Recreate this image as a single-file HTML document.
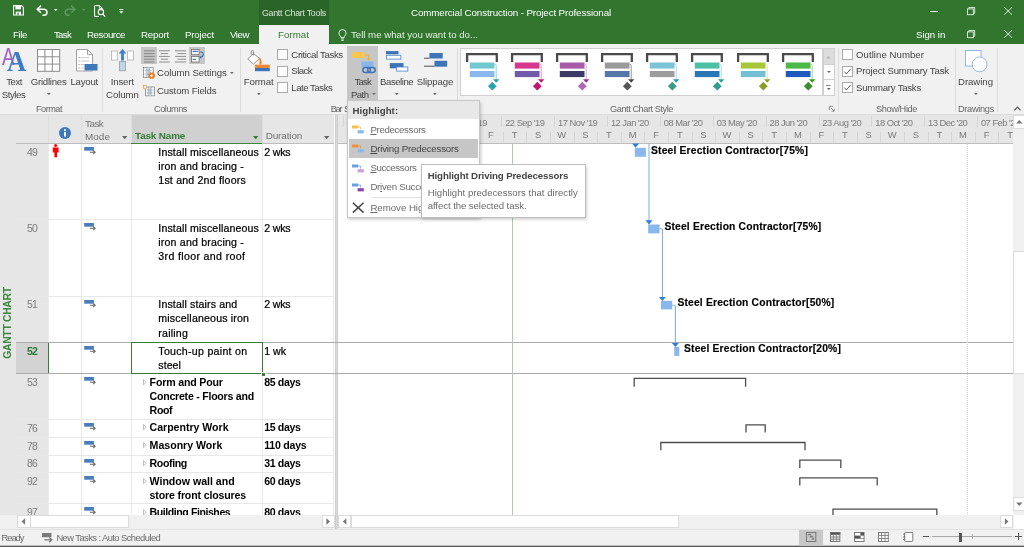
<!DOCTYPE html><html><head><meta charset="utf-8"><title>Commercial Construction - Project Professional</title><style>

html,body{margin:0;padding:0;}
body{width:1024px;height:547px;overflow:hidden;position:relative;background:#fff;font-family:"Liberation Sans",sans-serif;}
#root{position:absolute;left:0;top:0;width:1024px;height:547px;overflow:hidden;will-change:transform;}
.a{position:absolute;}
.t{position:absolute;white-space:nowrap;line-height:12px;font-family:"Liberation Sans",sans-serif;}
svg{position:absolute;overflow:visible;}
.cb{position:absolute;width:9px;height:9px;border:1px solid #ababab;background:#fff;}
.sep{position:absolute;width:1px;background:#dcdcdc;top:48px;height:64px;}

</style></head><body><div id="root">
<div class="a" style="left:0px;top:0px;width:1024px;height:44px;background:#31752f;"></div>
<div class="a" style="left:259px;top:0px;width:70px;height:25px;background:#2a6428;"></div>
<div class="a" style="left:259px;top:25px;width:70px;height:19px;background:#f1f1f1;"></div>
<span class="t" id="t0" style="left:262px;top:7px;font-size:8.8px;color:#d6e6d5;letter-spacing:-0.253px;">Gantt Chart Tools</span>
<span class="t" id="t1" style="left:411px;top:6.7px;font-size:9.8px;color:#fff;letter-spacing:-0.126px;">Commercial Construction - Project Professional</span>
<span class="t" id="t2" style="left:13px;top:29px;font-size:9.7px;color:#fff;letter-spacing:-0.406px;">File</span>
<span class="t" id="t3" style="left:54px;top:29px;font-size:9.7px;color:#fff;letter-spacing:-0.730px;">Task</span>
<span class="t" id="t4" style="left:87px;top:29px;font-size:9.7px;color:#fff;letter-spacing:-0.434px;">Resource</span>
<span class="t" id="t5" style="left:141px;top:29px;font-size:9.7px;color:#fff;letter-spacing:-0.180px;">Report</span>
<span class="t" id="t6" style="left:185px;top:29px;font-size:9.7px;color:#fff;letter-spacing:-0.165px;">Project</span>
<span class="t" id="t7" style="left:230px;top:29px;font-size:9.7px;color:#fff;letter-spacing:-0.457px;">View</span>
<span class="t" id="t8" style="left:278px;top:29px;font-size:9.7px;color:#357a33;letter-spacing:0.052px;">Format</span>
<span class="t" id="t9" style="left:351px;top:29px;font-size:9.7px;color:#e4efe3;letter-spacing:-0.021px;">Tell me what you want to do...</span>
<span class="t" id="t10" style="left:916.1px;top:28.8px;font-size:9.7px;color:#fff;letter-spacing:-0.075px;">Sign in</span>
<div class="a" style="left:0px;top:44px;width:1024px;height:71px;background:#f1f1f1;"></div>
<div class="a" style="left:0px;top:114px;width:1024px;height:1px;background:#dcdcdc;"></div>
<div class="sep" style="left:102px"></div>
<div class="sep" style="left:240px"></div>
<div class="sep" style="left:457px"></div>
<div class="sep" style="left:838px"></div>
<div class="sep" style="left:955px"></div>
<div class="sep" style="left:997px"></div>
<span class="t" id="t11" style="left:6.3px;top:75.7px;font-size:9.6px;color:#444;letter-spacing:-0.477px;">Text</span>
<span class="t" id="t12" style="left:1.8px;top:88.6px;font-size:9.6px;color:#444;letter-spacing:-0.440px;">Styles</span>
<span class="t" id="t13" style="left:30.7px;top:75.7px;font-size:9.6px;color:#444;letter-spacing:-0.229px;">Gridlines</span>
<span class="t" id="t14" style="left:70.5px;top:75.7px;font-size:9.6px;color:#444;letter-spacing:-0.219px;">Layout</span>
<span class="t" id="t15" style="left:110.8px;top:75.7px;font-size:9.6px;color:#444;letter-spacing:-0.167px;">Insert</span>
<span class="t" id="t16" style="left:106px;top:88.6px;font-size:9.6px;color:#444;letter-spacing:-0.027px;">Column</span>
<span class="t" id="t17" style="left:157px;top:67.3px;font-size:9.6px;color:#444;letter-spacing:-0.039px;">Column Settings</span>
<span class="t" id="t18" style="left:157px;top:85.2px;font-size:9.6px;color:#444;letter-spacing:-0.147px;">Custom Fields</span>
<span class="t" id="t19" style="left:243.8px;top:75.7px;font-size:9.6px;color:#444;letter-spacing:-0.115px;">Format</span>
<span class="t" id="t20" style="left:291.3px;top:48.7px;font-size:9.6px;color:#444;letter-spacing:-0.346px;">Critical Tasks</span>
<span class="t" id="t21" style="left:291.3px;top:65.2px;font-size:9.6px;color:#444;letter-spacing:-0.554px;">Slack</span>
<span class="t" id="t22" style="left:291.3px;top:82px;font-size:9.6px;color:#444;letter-spacing:-0.469px;">Late Tasks</span>
<div class="a" style="left:347px;top:46px;width:31px;height:55px;background:#c6c6c6;"></div>
<span class="t" id="t23" style="left:354.6px;top:75.7px;font-size:9.6px;color:#444;letter-spacing:-0.834px;">Task</span>
<span class="t" id="t24" style="left:351px;top:88.6px;font-size:9.6px;color:#444;letter-spacing:-0.562px;">Path</span>
<span class="t" id="t25" style="left:380.1px;top:75.7px;font-size:9.6px;color:#444;letter-spacing:-0.464px;">Baseline</span>
<span class="t" id="t26" style="left:416.7px;top:75.7px;font-size:9.6px;color:#444;letter-spacing:-0.105px;">Slippage</span>
<span class="t" id="t27" style="left:856px;top:48.7px;font-size:9.6px;color:#444;letter-spacing:0.058px;">Outline Number</span>
<span class="t" id="t28" style="left:856px;top:65.2px;font-size:9.6px;color:#444;letter-spacing:-0.140px;">Project Summary Task</span>
<span class="t" id="t29" style="left:856px;top:82px;font-size:9.6px;color:#444;letter-spacing:-0.236px;">Summary Tasks</span>
<span class="t" id="t30" style="left:958px;top:75.7px;font-size:9.6px;color:#444;letter-spacing:-0.029px;">Drawing</span>
<span class="t" id="t31" style="left:36px;top:102.6px;font-size:9.2px;color:#666;letter-spacing:-0.518px;">Format</span>
<span class="t" id="t32" style="left:154px;top:102.6px;font-size:9.2px;color:#666;letter-spacing:-0.467px;">Columns</span>
<span class="t" id="t33" style="left:330.7px;top:102.6px;font-size:9.2px;color:#666;letter-spacing:-1.200px;">Bar</span>
<span class="t" id="t34" style="left:343.9px;top:102.6px;font-size:9.2px;color:#666;">Styles</span>
<span class="t" id="t35" style="left:610px;top:102.6px;font-size:9.2px;color:#666;letter-spacing:-0.439px;">Gantt Chart Style</span>
<span class="t" id="t36" style="left:876px;top:102.6px;font-size:9.2px;color:#666;letter-spacing:-0.382px;">Show/Hide</span>
<span class="t" id="t37" style="left:958px;top:102.6px;font-size:9.2px;color:#666;letter-spacing:-0.287px;">Drawings</span>
<div class="cb" style="left:277px;top:49px"></div>
<div class="cb" style="left:277px;top:66px"></div>
<div class="cb" style="left:277px;top:82px"></div>
<div class="cb" style="left:842px;top:49px"></div>
<div class="cb" style="left:842px;top:66px"></div>
<svg style="left:842px;top:66px" width="11" height="11"><path d="M2.4 5.6 L4.4 8 L8.6 2.9" fill="none" stroke="#555" stroke-width="0.95"/></svg>
<div class="cb" style="left:842px;top:82px"></div>
<svg style="left:842px;top:82px" width="11" height="11"><path d="M2.4 5.6 L4.4 8 L8.6 2.9" fill="none" stroke="#555" stroke-width="0.95"/></svg>
<div class="a" style="left:460px;top:47.6px;width:363px;height:48.4px;background:#fff;border:1px solid #d0d0d0;box-sizing:border-box;"></div>
<div class="a" style="left:0px;top:115px;width:1024px;height:400px;background:#fff;"></div>
<div class="a" style="left:0px;top:115px;width:48px;height:400px;background:#e6e6e6;"></div>
<div class="a" style="left:0px;top:115px;width:1024px;height:28px;background:#e6e6e6;"></div>
<div class="a" style="left:131px;top:115px;width:131px;height:28px;background:#d0d0d0;"></div>
<div class="a" style="left:16px;top:143px;width:1008px;height:1px;background:#bdbdbd;"></div>
<div class="a" style="left:131px;top:142.5px;width:131px;height:1.5px;background:#3b8a3b;"></div>
<div class="a" style="left:48px;top:115px;width:1px;height:28px;background:#dedede;"></div>
<div class="a" style="left:81px;top:115px;width:1px;height:28px;background:#dedede;"></div>
<div class="a" style="left:131px;top:115px;width:1px;height:28px;background:#dedede;"></div>
<div class="a" style="left:262px;top:115px;width:1px;height:28px;background:#dedede;"></div>
<div class="a" style="left:48px;top:144px;width:1px;height:371px;background:#e8e8e8;"></div>
<div class="a" style="left:81px;top:144px;width:1px;height:371px;background:#e8e8e8;"></div>
<div class="a" style="left:131px;top:144px;width:1px;height:371px;background:#e8e8e8;"></div>
<div class="a" style="left:262px;top:144px;width:1px;height:371px;background:#e8e8e8;"></div>
<div class="a" style="left:333px;top:144px;width:1px;height:371px;background:#e8e8e8;"></div>
<div class="a" style="left:48px;top:144px;width:1px;height:371px;background:#ececec;"></div>
<div class="a" style="left:334px;top:115px;width:1px;height:400px;background:#fff;"></div>
<div class="a" style="left:334.9px;top:115px;width:3.3px;height:400px;background:#cecece;"></div>
<div class="a" style="left:335.8px;top:115px;width:1.5px;height:400px;background:#dadada;"></div>
<div class="a" style="left:16px;top:219.3px;width:318px;height:1px;background:#e8e8e8;"></div>
<div class="a" style="left:16px;top:295.8px;width:318px;height:1px;background:#e8e8e8;"></div>
<div class="a" style="left:16px;top:419.1px;width:318px;height:1px;background:#e8e8e8;"></div>
<div class="a" style="left:16px;top:437.2px;width:318px;height:1px;background:#e8e8e8;"></div>
<div class="a" style="left:16px;top:454.6px;width:318px;height:1px;background:#e8e8e8;"></div>
<div class="a" style="left:16px;top:472.3px;width:318px;height:1px;background:#e8e8e8;"></div>
<div class="a" style="left:16px;top:503.4px;width:318px;height:1px;background:#e8e8e8;"></div>
<div class="a" style="left:16px;top:343px;width:32px;height:30px;background:#d3d3d3;"></div>
<div class="a" style="left:16px;top:342px;width:998px;height:1px;background:#ababab;"></div>
<div class="a" style="left:16px;top:373px;width:998px;height:1px;background:#ababab;"></div>
<div class="a" style="left:131px;top:342px;width:130px;height:30px;border:1.3px solid #3a7d3a;"></div>
<div class="a" style="left:261px;top:372px;width:2.8px;height:2.8px;background:#3a7d3a;border:0.5px solid #fff;"></div>
<div class="a" style="left:48px;top:343px;width:1px;height:30px;background:#3a7d3a;"></div>
<span class="t" id="t38" style="left:85px;top:118px;font-size:9.9px;color:#707070;letter-spacing:-0.503px;">Task</span>
<span class="t" id="t39" style="left:85px;top:131.2px;font-size:9.9px;color:#707070;letter-spacing:0.074px;">Mode</span>
<span class="t" id="t40" style="left:135px;top:130.2px;font-size:9.9px;color:#2f7d32;font-weight:bold;letter-spacing:-0.136px;">Task Name</span>
<span class="t" id="t41" style="left:265.7px;top:130.2px;font-size:9.9px;color:#707070;letter-spacing:-0.104px;">Duration</span>
<svg style="left:122px;top:136px" width="6" height="4"><path d="M0 0H5.4L2.7 3.2Z" fill="#666"/></svg>
<svg style="left:253px;top:136px" width="6" height="4"><path d="M0 0H5.4L2.7 3.2Z" fill="#2f7d32"/></svg>
<svg style="left:324px;top:136px" width="6" height="4"><path d="M0 0H5.4L2.7 3.2Z" fill="#666"/></svg>
<svg style="left:59px;top:127px" width="12" height="12"><circle cx="6" cy="6" r="6" fill="#3e78b8"/><rect x="5.1" y="5" width="1.8" height="4.6" fill="#fff"/><circle cx="6" cy="3.1" r="1.05" fill="#fff"/></svg>
<div class="a" style="left:0;top:144px;width:338px;height:371px;overflow:hidden"><div class="a" style="left:0;top:-144px;width:338px;height:600px">
<span class="t" id="t42" style="left:27.1px;top:145.8px;font-size:10.5px;color:#7c7c7c;letter-spacing:-0.844px;">49</span>
<svg style="left:84px;top:147.3px" width="13" height="9"><rect x="0.2" y="0" width="9.7" height="3.7" fill="#4a7ebb"/><path d="M6 5.3H11M9.2 3.5L11.2 5.3L9.2 7.1" fill="none" stroke="#6a6a6a" stroke-width="1.05"/></svg>
<span class="t" id="t43" style="left:158.3px;top:145.6px;font-size:10.6px;color:#000;letter-spacing:0.140px;-webkit-text-stroke:0.22px #000;">Install miscellaneous</span>
<span class="t" id="t44" style="left:158.3px;top:160px;font-size:10.6px;color:#000;letter-spacing:0.180px;-webkit-text-stroke:0.22px #000;">iron and bracing -</span>
<span class="t" id="t45" style="left:158.3px;top:174.4px;font-size:10.6px;color:#000;letter-spacing:0.193px;-webkit-text-stroke:0.22px #000;">1st and 2nd floors</span>
<span class="t" id="t46" style="left:264.2px;top:145.6px;font-size:10.6px;color:#000;letter-spacing:-0.179px;-webkit-text-stroke:0.22px #000;">2 wks</span>
<span class="t" id="t47" style="left:27.1px;top:221.7px;font-size:10.5px;color:#7c7c7c;letter-spacing:-0.844px;">50</span>
<svg style="left:84px;top:223.2px" width="13" height="9"><rect x="0.2" y="0" width="9.7" height="3.7" fill="#4a7ebb"/><path d="M6 5.3H11M9.2 3.5L11.2 5.3L9.2 7.1" fill="none" stroke="#6a6a6a" stroke-width="1.05"/></svg>
<span class="t" id="t48" style="left:158.3px;top:221.5px;font-size:10.6px;color:#000;letter-spacing:0.140px;-webkit-text-stroke:0.22px #000;">Install miscellaneous</span>
<span class="t" id="t49" style="left:158.3px;top:235.9px;font-size:10.6px;color:#000;letter-spacing:0.180px;-webkit-text-stroke:0.22px #000;">iron and bracing -</span>
<span class="t" id="t50" style="left:158.3px;top:250.3px;font-size:10.6px;color:#000;letter-spacing:0.351px;-webkit-text-stroke:0.22px #000;">3rd floor and roof</span>
<span class="t" id="t51" style="left:264.2px;top:221.5px;font-size:10.6px;color:#000;letter-spacing:-0.179px;-webkit-text-stroke:0.22px #000;">2 wks</span>
<span class="t" id="t52" style="left:27.1px;top:298.2px;font-size:10.5px;color:#7c7c7c;letter-spacing:-0.844px;">51</span>
<svg style="left:84px;top:299.7px" width="13" height="9"><rect x="0.2" y="0" width="9.7" height="3.7" fill="#4a7ebb"/><path d="M6 5.3H11M9.2 3.5L11.2 5.3L9.2 7.1" fill="none" stroke="#6a6a6a" stroke-width="1.05"/></svg>
<span class="t" id="t53" style="left:158.3px;top:298px;font-size:10.6px;color:#000;letter-spacing:0.142px;-webkit-text-stroke:0.22px #000;">Install stairs and</span>
<span class="t" id="t54" style="left:158.3px;top:312.4px;font-size:10.6px;color:#000;letter-spacing:0.175px;-webkit-text-stroke:0.22px #000;">miscellaneous iron</span>
<span class="t" id="t55" style="left:158.3px;top:326.8px;font-size:10.6px;color:#000;letter-spacing:0.205px;-webkit-text-stroke:0.22px #000;">railing</span>
<span class="t" id="t56" style="left:264.2px;top:298px;font-size:10.6px;color:#000;letter-spacing:-0.179px;-webkit-text-stroke:0.22px #000;">2 wks</span>
<span class="t" id="t57" style="left:27.1px;top:344.8px;font-size:10.5px;color:#2a7a34;font-weight:bold;letter-spacing:-0.844px;">52</span>
<svg style="left:84px;top:346.3px" width="13" height="9"><rect x="0.2" y="0" width="9.7" height="3.7" fill="#4a7ebb"/><path d="M6 5.3H11M9.2 3.5L11.2 5.3L9.2 7.1" fill="none" stroke="#6a6a6a" stroke-width="1.05"/></svg>
<span class="t" id="t58" style="left:158.3px;top:344.6px;font-size:10.6px;color:#000;letter-spacing:0.286px;-webkit-text-stroke:0.22px #000;">Touch-up paint on</span>
<span class="t" id="t59" style="left:158.3px;top:359px;font-size:10.6px;color:#000;letter-spacing:0.062px;-webkit-text-stroke:0.22px #000;">steel</span>
<span class="t" id="t60" style="left:264.2px;top:344.6px;font-size:10.6px;color:#000;-webkit-text-stroke:0.22px #000;">1 wk</span>
<span class="t" id="t61" style="left:27.1px;top:375.8px;font-size:10.5px;color:#7c7c7c;letter-spacing:-0.844px;">53</span>
<svg style="left:84px;top:377.3px" width="13" height="9"><rect x="0.2" y="0" width="9.7" height="3.7" fill="#4a7ebb"/><path d="M6 5.3H11M9.2 3.5L11.2 5.3L9.2 7.1" fill="none" stroke="#6a6a6a" stroke-width="1.05"/></svg>
<svg style="left:142.7px;top:378.6px" width="5" height="8"><path d="M0.5 0.6V5.8L3.3 3.2Z" fill="#fff" stroke="#ababab" stroke-width="0.75"/></svg>
<span class="t" id="t62" style="left:149.6px;top:375.6px;font-size:10.6px;color:#000;font-weight:bold;letter-spacing:-0.173px;">Form and Pour</span>
<span class="t" id="t63" style="left:149.6px;top:390px;font-size:10.6px;color:#000;font-weight:bold;letter-spacing:-0.247px;">Concrete - Floors and</span>
<span class="t" id="t64" style="left:149.6px;top:404.4px;font-size:10.6px;color:#000;font-weight:bold;letter-spacing:-0.356px;">Roof</span>
<span class="t" id="t65" style="left:264.2px;top:375.6px;font-size:10.6px;color:#000;font-weight:bold;letter-spacing:-0.368px;">85 days</span>
<span class="t" id="t66" style="left:27.1px;top:421.5px;font-size:10.5px;color:#7c7c7c;letter-spacing:-0.844px;">76</span>
<svg style="left:84px;top:423px" width="13" height="9"><rect x="0.2" y="0" width="9.7" height="3.7" fill="#4a7ebb"/><path d="M6 5.3H11M9.2 3.5L11.2 5.3L9.2 7.1" fill="none" stroke="#6a6a6a" stroke-width="1.05"/></svg>
<svg style="left:142.7px;top:424.3px" width="5" height="8"><path d="M0.5 0.6V5.8L3.3 3.2Z" fill="#fff" stroke="#ababab" stroke-width="0.75"/></svg>
<span class="t" id="t67" style="left:149.6px;top:421.3px;font-size:10.6px;color:#000;font-weight:bold;letter-spacing:-0.027px;">Carpentry Work</span>
<span class="t" id="t68" style="left:264.2px;top:421.3px;font-size:10.6px;color:#000;font-weight:bold;letter-spacing:-0.368px;">15 days</span>
<span class="t" id="t69" style="left:27.1px;top:439.6px;font-size:10.5px;color:#7c7c7c;letter-spacing:-0.844px;">78</span>
<svg style="left:84px;top:441.1px" width="13" height="9"><rect x="0.2" y="0" width="9.7" height="3.7" fill="#4a7ebb"/><path d="M6 5.3H11M9.2 3.5L11.2 5.3L9.2 7.1" fill="none" stroke="#6a6a6a" stroke-width="1.05"/></svg>
<svg style="left:142.7px;top:442.4px" width="5" height="8"><path d="M0.5 0.6V5.8L3.3 3.2Z" fill="#fff" stroke="#ababab" stroke-width="0.75"/></svg>
<span class="t" id="t70" style="left:149.6px;top:439.4px;font-size:10.6px;color:#000;font-weight:bold;letter-spacing:-0.009px;">Masonry Work</span>
<span class="t" id="t71" style="left:264.2px;top:439.4px;font-size:10.6px;color:#000;font-weight:bold;letter-spacing:-0.236px;">110 days</span>
<span class="t" id="t72" style="left:27.1px;top:457px;font-size:10.5px;color:#7c7c7c;letter-spacing:-0.844px;">86</span>
<svg style="left:84px;top:458.5px" width="13" height="9"><rect x="0.2" y="0" width="9.7" height="3.7" fill="#4a7ebb"/><path d="M6 5.3H11M9.2 3.5L11.2 5.3L9.2 7.1" fill="none" stroke="#6a6a6a" stroke-width="1.05"/></svg>
<svg style="left:142.7px;top:459.8px" width="5" height="8"><path d="M0.5 0.6V5.8L3.3 3.2Z" fill="#fff" stroke="#ababab" stroke-width="0.75"/></svg>
<span class="t" id="t73" style="left:149.6px;top:456.8px;font-size:10.6px;color:#000;font-weight:bold;letter-spacing:-0.388px;">Roofing</span>
<span class="t" id="t74" style="left:264.2px;top:456.8px;font-size:10.6px;color:#000;font-weight:bold;letter-spacing:-0.368px;">31 days</span>
<span class="t" id="t75" style="left:27.1px;top:474.7px;font-size:10.5px;color:#7c7c7c;letter-spacing:-0.844px;">92</span>
<svg style="left:84px;top:476.2px" width="13" height="9"><rect x="0.2" y="0" width="9.7" height="3.7" fill="#4a7ebb"/><path d="M6 5.3H11M9.2 3.5L11.2 5.3L9.2 7.1" fill="none" stroke="#6a6a6a" stroke-width="1.05"/></svg>
<svg style="left:142.7px;top:477.5px" width="5" height="8"><path d="M0.5 0.6V5.8L3.3 3.2Z" fill="#fff" stroke="#ababab" stroke-width="0.75"/></svg>
<span class="t" id="t76" style="left:149.6px;top:474.5px;font-size:10.6px;color:#000;font-weight:bold;letter-spacing:-0.017px;">Window wall and</span>
<span class="t" id="t77" style="left:149.6px;top:488.9px;font-size:10.6px;color:#000;font-weight:bold;letter-spacing:-0.155px;">store front closures</span>
<span class="t" id="t78" style="left:264.2px;top:474.5px;font-size:10.6px;color:#000;font-weight:bold;letter-spacing:-0.368px;">60 days</span>
<span class="t" id="t79" style="left:27.1px;top:505.8px;font-size:10.5px;color:#7c7c7c;letter-spacing:-0.844px;">97</span>
<svg style="left:84px;top:507.3px" width="13" height="9"><rect x="0.2" y="0" width="9.7" height="3.7" fill="#4a7ebb"/><path d="M6 5.3H11M9.2 3.5L11.2 5.3L9.2 7.1" fill="none" stroke="#6a6a6a" stroke-width="1.05"/></svg>
<svg style="left:142.7px;top:508.6px" width="5" height="8"><path d="M0.5 0.6V5.8L3.3 3.2Z" fill="#fff" stroke="#ababab" stroke-width="0.75"/></svg>
<span class="t" id="t80" style="left:149.6px;top:505.6px;font-size:10.6px;color:#000;font-weight:bold;letter-spacing:-0.447px;">Building Finishes</span>
<span class="t" id="t81" style="left:264.2px;top:505.6px;font-size:10.6px;color:#000;font-weight:bold;letter-spacing:-0.368px;">80 days</span>
</div></div>
<svg style="left:52px;top:144px" width="8" height="13"><circle cx="3.6" cy="1.6" r="1.5" fill="#f00"/><path d="M0.8 3.4H6.6V8.6H5V13.2H2.4V8.6H0.8Z" fill="#f00"/></svg>
<span class="t" id="gc" style="left:-32.3px;top:317.2px;width:80px;text-align:center;transform:rotate(-90deg);font-size:10.4px;font-weight:bold;color:#38873c;letter-spacing:-0.32px">GANTT CHART</span>
<div class="a" style="left:338px;top:115px;width:676px;height:28px;overflow:hidden"><div class="a" style="left:-338px;top:-115px;width:1100px;height:200px">
<div class="a" style="left:342.82px;top:116px;width:1px;height:11px;background:#d6d6d6;"></div>
<span class="t" id="t82" style="left:346.62px;top:116.7px;font-size:9.4px;color:#7a7a7a;letter-spacing:-0.53px;">07 Apr '19</span>
<div class="a" style="left:395.68px;top:116px;width:1px;height:11px;background:#d6d6d6;"></div>
<span class="t" id="t83" style="left:399.48px;top:116.7px;font-size:9.4px;color:#7a7a7a;letter-spacing:-0.53px;">02 Jun '19</span>
<div class="a" style="left:448.54px;top:116px;width:1px;height:11px;background:#d6d6d6;"></div>
<span class="t" id="t84" style="left:452.34px;top:116.7px;font-size:9.4px;color:#7a7a7a;letter-spacing:-0.53px;">28 Jul '19</span>
<div class="a" style="left:501.4px;top:116px;width:1px;height:11px;background:#d6d6d6;"></div>
<span class="t" id="t85" style="left:505.2px;top:116.7px;font-size:9.4px;color:#7a7a7a;letter-spacing:-0.53px;">22 Sep '19</span>
<div class="a" style="left:554.26px;top:116px;width:1px;height:11px;background:#d6d6d6;"></div>
<span class="t" id="t86" style="left:558.06px;top:116.7px;font-size:9.4px;color:#7a7a7a;letter-spacing:-0.53px;">17 Nov '19</span>
<div class="a" style="left:607.12px;top:116px;width:1px;height:11px;background:#d6d6d6;"></div>
<span class="t" id="t87" style="left:610.92px;top:116.7px;font-size:9.4px;color:#7a7a7a;letter-spacing:-0.53px;">12 Jan '20</span>
<div class="a" style="left:659.98px;top:116px;width:1px;height:11px;background:#d6d6d6;"></div>
<span class="t" id="t88" style="left:663.78px;top:116.7px;font-size:9.4px;color:#7a7a7a;letter-spacing:-0.53px;">08 Mar '20</span>
<div class="a" style="left:712.84px;top:116px;width:1px;height:11px;background:#d6d6d6;"></div>
<span class="t" id="t89" style="left:716.64px;top:116.7px;font-size:9.4px;color:#7a7a7a;letter-spacing:-0.53px;">03 May '20</span>
<div class="a" style="left:765.7px;top:116px;width:1px;height:11px;background:#d6d6d6;"></div>
<span class="t" id="t90" style="left:769.5px;top:116.7px;font-size:9.4px;color:#7a7a7a;letter-spacing:-0.53px;">28 Jun '20</span>
<div class="a" style="left:818.56px;top:116px;width:1px;height:11px;background:#d6d6d6;"></div>
<span class="t" id="t91" style="left:822.36px;top:116.7px;font-size:9.4px;color:#7a7a7a;letter-spacing:-0.53px;">23 Aug '20</span>
<div class="a" style="left:871.42px;top:116px;width:1px;height:11px;background:#d6d6d6;"></div>
<span class="t" id="t92" style="left:875.22px;top:116.7px;font-size:9.4px;color:#7a7a7a;letter-spacing:-0.53px;">18 Oct '20</span>
<div class="a" style="left:924.28px;top:116px;width:1px;height:11px;background:#d6d6d6;"></div>
<span class="t" id="t93" style="left:928.08px;top:116.7px;font-size:9.4px;color:#7a7a7a;letter-spacing:-0.53px;">13 Dec '20</span>
<div class="a" style="left:977.14px;top:116px;width:1px;height:11px;background:#d6d6d6;"></div>
<span class="t" id="t94" style="left:980.94px;top:116.7px;font-size:9.4px;color:#7a7a7a;letter-spacing:-0.53px;">07 Feb '21</span>
<div class="a" style="left:361.2px;top:131.6px;width:1px;height:11.4px;background:#d6d6d6;"></div>
<span class="t" style="left:361.2px;top:129.1px;width:23.6px;text-align:center;font-size:9.4px;color:#7a7a7a">S</span>
<div class="a" style="left:384.8px;top:131.6px;width:1px;height:11.4px;background:#d6d6d6;"></div>
<span class="t" style="left:384.8px;top:129.1px;width:23.6px;text-align:center;font-size:9.4px;color:#7a7a7a">W</span>
<div class="a" style="left:408.4px;top:131.6px;width:1px;height:11.4px;background:#d6d6d6;"></div>
<span class="t" style="left:408.4px;top:129.1px;width:23.6px;text-align:center;font-size:9.4px;color:#7a7a7a">S</span>
<div class="a" style="left:432px;top:131.6px;width:1px;height:11.4px;background:#d6d6d6;"></div>
<span class="t" style="left:432px;top:129.1px;width:23.6px;text-align:center;font-size:9.4px;color:#7a7a7a">T</span>
<div class="a" style="left:455.6px;top:131.6px;width:1px;height:11.4px;background:#d6d6d6;"></div>
<span class="t" style="left:455.6px;top:129.1px;width:23.6px;text-align:center;font-size:9.4px;color:#7a7a7a">M</span>
<div class="a" style="left:479.2px;top:131.6px;width:1px;height:11.4px;background:#d6d6d6;"></div>
<span class="t" style="left:479.2px;top:129.1px;width:23.6px;text-align:center;font-size:9.4px;color:#7a7a7a">F</span>
<div class="a" style="left:502.8px;top:131.6px;width:1px;height:11.4px;background:#d6d6d6;"></div>
<span class="t" style="left:502.8px;top:129.1px;width:23.6px;text-align:center;font-size:9.4px;color:#7a7a7a">T</span>
<div class="a" style="left:526.4px;top:131.6px;width:1px;height:11.4px;background:#d6d6d6;"></div>
<span class="t" style="left:526.4px;top:129.1px;width:23.6px;text-align:center;font-size:9.4px;color:#7a7a7a">S</span>
<div class="a" style="left:550px;top:131.6px;width:1px;height:11.4px;background:#d6d6d6;"></div>
<span class="t" style="left:550px;top:129.1px;width:23.6px;text-align:center;font-size:9.4px;color:#7a7a7a">W</span>
<div class="a" style="left:573.6px;top:131.6px;width:1px;height:11.4px;background:#d6d6d6;"></div>
<span class="t" style="left:573.6px;top:129.1px;width:23.6px;text-align:center;font-size:9.4px;color:#7a7a7a">S</span>
<div class="a" style="left:597.2px;top:131.6px;width:1px;height:11.4px;background:#d6d6d6;"></div>
<span class="t" style="left:597.2px;top:129.1px;width:23.6px;text-align:center;font-size:9.4px;color:#7a7a7a">T</span>
<div class="a" style="left:620.8px;top:131.6px;width:1px;height:11.4px;background:#d6d6d6;"></div>
<span class="t" style="left:620.8px;top:129.1px;width:23.6px;text-align:center;font-size:9.4px;color:#7a7a7a">M</span>
<div class="a" style="left:644.4px;top:131.6px;width:1px;height:11.4px;background:#d6d6d6;"></div>
<span class="t" style="left:644.4px;top:129.1px;width:23.6px;text-align:center;font-size:9.4px;color:#7a7a7a">F</span>
<div class="a" style="left:668px;top:131.6px;width:1px;height:11.4px;background:#d6d6d6;"></div>
<span class="t" style="left:668px;top:129.1px;width:23.6px;text-align:center;font-size:9.4px;color:#7a7a7a">T</span>
<div class="a" style="left:691.6px;top:131.6px;width:1px;height:11.4px;background:#d6d6d6;"></div>
<span class="t" style="left:691.6px;top:129.1px;width:23.6px;text-align:center;font-size:9.4px;color:#7a7a7a">S</span>
<div class="a" style="left:715.2px;top:131.6px;width:1px;height:11.4px;background:#d6d6d6;"></div>
<span class="t" style="left:715.2px;top:129.1px;width:23.6px;text-align:center;font-size:9.4px;color:#7a7a7a">W</span>
<div class="a" style="left:738.8px;top:131.6px;width:1px;height:11.4px;background:#d6d6d6;"></div>
<span class="t" style="left:738.8px;top:129.1px;width:23.6px;text-align:center;font-size:9.4px;color:#7a7a7a">S</span>
<div class="a" style="left:762.4px;top:131.6px;width:1px;height:11.4px;background:#d6d6d6;"></div>
<span class="t" style="left:762.4px;top:129.1px;width:23.6px;text-align:center;font-size:9.4px;color:#7a7a7a">T</span>
<div class="a" style="left:786px;top:131.6px;width:1px;height:11.4px;background:#d6d6d6;"></div>
<span class="t" style="left:786px;top:129.1px;width:23.6px;text-align:center;font-size:9.4px;color:#7a7a7a">M</span>
<div class="a" style="left:809.6px;top:131.6px;width:1px;height:11.4px;background:#d6d6d6;"></div>
<span class="t" style="left:809.6px;top:129.1px;width:23.6px;text-align:center;font-size:9.4px;color:#7a7a7a">F</span>
<div class="a" style="left:833.2px;top:131.6px;width:1px;height:11.4px;background:#d6d6d6;"></div>
<span class="t" style="left:833.2px;top:129.1px;width:23.6px;text-align:center;font-size:9.4px;color:#7a7a7a">T</span>
<div class="a" style="left:856.8px;top:131.6px;width:1px;height:11.4px;background:#d6d6d6;"></div>
<span class="t" style="left:856.8px;top:129.1px;width:23.6px;text-align:center;font-size:9.4px;color:#7a7a7a">S</span>
<div class="a" style="left:880.4px;top:131.6px;width:1px;height:11.4px;background:#d6d6d6;"></div>
<span class="t" style="left:880.4px;top:129.1px;width:23.6px;text-align:center;font-size:9.4px;color:#7a7a7a">W</span>
<div class="a" style="left:904px;top:131.6px;width:1px;height:11.4px;background:#d6d6d6;"></div>
<span class="t" style="left:904px;top:129.1px;width:23.6px;text-align:center;font-size:9.4px;color:#7a7a7a">S</span>
<div class="a" style="left:927.6px;top:131.6px;width:1px;height:11.4px;background:#d6d6d6;"></div>
<span class="t" style="left:927.6px;top:129.1px;width:23.6px;text-align:center;font-size:9.4px;color:#7a7a7a">T</span>
<div class="a" style="left:951.2px;top:131.6px;width:1px;height:11.4px;background:#d6d6d6;"></div>
<span class="t" style="left:951.2px;top:129.1px;width:23.6px;text-align:center;font-size:9.4px;color:#7a7a7a">M</span>
<div class="a" style="left:974.8px;top:131.6px;width:1px;height:11.4px;background:#d6d6d6;"></div>
<span class="t" style="left:974.8px;top:129.1px;width:23.6px;text-align:center;font-size:9.4px;color:#7a7a7a">F</span>
<div class="a" style="left:998.4px;top:131.6px;width:1px;height:11.4px;background:#d6d6d6;"></div>
<span class="t" style="left:998.4px;top:129.1px;width:23.6px;text-align:center;font-size:9.4px;color:#7a7a7a">T</span>
</div></div>
<div class="a" style="left:512px;top:144px;width:1px;height:371px;background:#a6d0a6;"></div>
<div class="a" style="left:967px;top:144px;width:0;height:371px;border-left:1px dotted #d2d2d2"></div>
<svg style="left:0;top:0" width="1024" height="547">
<rect x="634.8" y="147.8" width="11.1" height="9" fill="#8ab8ec"/>
<rect x="648.1" y="224.5" width="11.5" height="8.9" fill="#8ab8ec"/>
<rect x="661" y="300.8" width="11.2" height="8.6" fill="#8ab8ec"/>
<rect x="674.2" y="346.8" width="5.1" height="9.1" fill="#8ab8ec"/>
<path d="M649 143.8V221" fill="none" stroke="#7fb1e8" stroke-width="1.4" opacity="0.75"/>
<path d="M659.6 228.7H661.3Q662.5 228.7 662.5 230V297" fill="none" stroke="#7fb1e8" stroke-width="1.1"/>
<path d="M672.2 305.3H674.2Q675.4 305.3 675.4 306.5V343.4" fill="none" stroke="#7fb1e8" stroke-width="1.1"/>
<path d="M632.1 143.6H639.1L635.6 147.7Z" fill="#2e7dd7"/>
<path d="M645.5 220.3H652.5L649 224.4Z" fill="#2e7dd7"/>
<path d="M658.9 296.9H665.9L662.4 301Z" fill="#2e7dd7"/>
<path d="M671.9 343H678.9L675.4 347.1Z" fill="#2e7dd7"/>
<path d="M634.2 386.8V378.4H745.6V386.8" fill="none" stroke="#4d4d4d" stroke-width="1.3"/>
<path d="M746 432.6V424.8H765.2V432.6" fill="none" stroke="#4d4d4d" stroke-width="1.3"/>
<path d="M660.8 450.3V442.5H805V450.3" fill="none" stroke="#4d4d4d" stroke-width="1.3"/>
<path d="M799.8 468V460.2H840.8V468" fill="none" stroke="#4d4d4d" stroke-width="1.3"/>
<path d="M799.8 485.6V477.9H877.2V485.6" fill="none" stroke="#4d4d4d" stroke-width="1.3"/>
<path d="M833 516V509.1H936.8V516" fill="none" stroke="#4d4d4d" stroke-width="1.3"/>
</svg>
<span class="t" id="t95" style="left:651px;top:144.8px;font-size:10.3px;color:#000;font-weight:bold;letter-spacing:0.179px;-webkit-text-stroke:0.15px #000;">Steel Erection Contractor[75%]</span>
<span class="t" id="t96" style="left:664.4px;top:220.8px;font-size:10.3px;color:#000;font-weight:bold;letter-spacing:0.179px;-webkit-text-stroke:0.15px #000;">Steel Erection Contractor[75%]</span>
<span class="t" id="t97" style="left:677.4px;top:297.4px;font-size:10.3px;color:#000;font-weight:bold;letter-spacing:0.179px;-webkit-text-stroke:0.15px #000;">Steel Erection Contractor[50%]</span>
<span class="t" id="t98" style="left:684px;top:343.4px;font-size:10.3px;color:#000;font-weight:bold;letter-spacing:0.179px;-webkit-text-stroke:0.15px #000;">Steel Erection Contractor[20%]</span>
<div class="a" style="left:1013.2px;top:115px;width:10.8px;height:400px;background:#f0f0f0;"></div>
<div class="a" style="left:0px;top:515px;width:1024px;height:13.5px;background:#f0f0f0;"></div>
<div class="a" style="left:17px;top:515px;width:13.5px;height:13px;background:#fff;border:1px solid #dcdcdc;box-sizing:border-box"></div>
<div class="a" style="left:30px;top:515px;width:98.5px;height:13px;background:#fff;border:1px solid #dcdcdc;box-sizing:border-box"></div>
<div class="a" style="left:321.5px;top:515px;width:13px;height:13px;background:#fff;border:1px solid #dcdcdc;box-sizing:border-box"></div>
<div class="a" style="left:338.4px;top:515px;width:13px;height:13px;background:#fff;border:1px solid #dcdcdc;box-sizing:border-box"></div>
<div class="a" style="left:351.4px;top:515px;width:327.6px;height:13px;background:#fff;border:1px solid #dcdcdc;box-sizing:border-box"></div>
<div class="a" style="left:1000px;top:515px;width:13px;height:13px;background:#fff;border:1px solid #dcdcdc;box-sizing:border-box"></div>
<div class="a" style="left:1013.5px;top:515px;width:10.5px;height:13.5px;background:#fff;"></div>
<div class="a" style="left:334.9px;top:515px;width:3.3px;height:13.5px;background:#cecece;"></div>
<div class="a" style="left:335.8px;top:515px;width:1.5px;height:13.5px;background:#dadada;"></div>
<div class="a" style="left:1013.2px;top:115.4px;width:11.5px;height:13.3px;background:#fff;border:1px solid #dcdcdc;box-sizing:border-box"></div>
<div class="a" style="left:1013.2px;top:251.3px;width:11.5px;height:122.6px;background:#fff;border:1px solid #dcdcdc;box-sizing:border-box"></div>
<div class="a" style="left:1013.2px;top:497.3px;width:11.5px;height:13.3px;background:#fff;border:1px solid #dcdcdc;box-sizing:border-box"></div>
<svg style="left:0;top:0" width="1" height="1"><path d="M21.5 521.5L25.1 518.3V524.7Z" fill="#777"/></svg>
<svg style="left:0;top:0" width="1" height="1"><path d="M330 521.5L326.4 518.3V524.7Z" fill="#777"/></svg>
<svg style="left:0;top:0" width="1" height="1"><path d="M342.8 521.5L346.4 518.3V524.7Z" fill="#777"/></svg>
<svg style="left:0;top:0" width="1" height="1"><path d="M1008.5 521.5L1004.9 518.3V524.7Z" fill="#777"/></svg>
<svg style="left:0;top:0" width="1" height="1"><path d="M1019.3 120L1016.1 123.6H1022.5Z" fill="#777"/></svg>
<svg style="left:0;top:0" width="1" height="1"><path d="M1019.3 506L1016.1 502.4H1022.5Z" fill="#777"/></svg>
<div class="a" style="left:0px;top:528.5px;width:1024px;height:18.5px;background:#f1f1f1;"></div>
<div class="a" style="left:0px;top:528.5px;width:1024px;height:1px;background:#e1e1e1;"></div>
<div class="a" style="left:0px;top:545.6px;width:1024px;height:1.4px;background:#5a5a5a;"></div>
<div class="a" style="left:0px;top:545px;width:1024px;height:0.7px;background:#bdbdbd;"></div>
<span class="t" id="t99" style="left:1.5px;top:532px;font-size:9.4px;color:#6a6a6a;letter-spacing:-1.042px;">Ready</span>
<span class="t" id="t100" style="left:56.4px;top:532px;font-size:9.4px;color:#6a6a6a;letter-spacing:-0.571px;">New Tasks : Auto Scheduled</span>
<div class="a" style="left:799px;top:529.5px;width:24.4px;height:16px;background:#c8c8c8;"></div>
<div class="a" style="left:347px;top:100px;width:132.8px;height:118px;background:#fff;border:1px solid #c6c6c6;box-sizing:border-box;box-shadow:1px 1.5px 3px rgba(0,0,0,0.22)"></div>
<div class="a" style="left:348px;top:101px;width:130.8px;height:18px;background:#e8e8e8;"></div>
<div class="a" style="left:348.6px;top:138.5px;width:129.9px;height:19px;background:#c6c6c6;"></div>
<div class="a" style="left:372px;top:196.5px;width:106px;height:1px;background:#e1e1e1;"></div>
<span class="t" id="t101" style="left:352.4px;top:105.2px;font-size:9.7px;color:#444;font-weight:bold;letter-spacing:0.060px;">Highlight:</span>
<span class="t" id="t102" style="left:370.4px;top:123.5px;font-size:9.7px;color:#6a6a6a;letter-spacing:-0.337px;"><u>P</u>redecessors</span>
<span class="t" id="t103" style="left:370.4px;top:142.5px;font-size:9.7px;color:#444;letter-spacing:-0.184px;"><u>D</u>riving Predecessors</span>
<span class="t" id="t104" style="left:370.4px;top:162px;font-size:9.7px;color:#6a6a6a;letter-spacing:-0.398px;"><u>S</u>uccessors</span>
<span class="t" id="t105" style="left:370.4px;top:181.2px;font-size:9.7px;color:#6a6a6a;letter-spacing:-0.264px;">Dr<u>i</u>ven Successors</span>
<span class="t" id="t106" style="left:370.4px;top:201.9px;font-size:9.7px;color:#6a6a6a;letter-spacing:-0.042px;"><u>R</u>emove Highlighting</span>
<svg style="left:352px;top:125px" width="13" height="10"><rect x="0" y="0.5" width="6.2" height="3" fill="#f5c242"/><rect x="5.6" y="5.2" width="6.2" height="3.2" fill="#8ab8ec"/><path d="M6.2 2H8.6V4.6" fill="none" stroke="#f5c242" stroke-width="0.8"/></svg>
<svg style="left:352px;top:144px" width="13" height="10"><rect x="0" y="0.5" width="6.2" height="3" fill="#f0913a"/><rect x="5.6" y="5.2" width="6.2" height="3.2" fill="#8ab8ec"/><path d="M6.2 2H8.6V4.6" fill="none" stroke="#f0913a" stroke-width="0.8"/></svg>
<svg style="left:352px;top:163.5px" width="13" height="10"><rect x="0" y="0.5" width="6.2" height="3" fill="#6aa0e0"/><rect x="5.6" y="5.2" width="6.2" height="3.2" fill="#c9a0dc"/><path d="M6.2 2H8.6V4.6" fill="none" stroke="#6aa0e0" stroke-width="0.8"/></svg>
<svg style="left:352px;top:183px" width="13" height="10"><rect x="0" y="0.5" width="6.2" height="3" fill="#6aa0e0"/><rect x="5.6" y="5.2" width="6.2" height="3.2" fill="#8e44ad"/><path d="M6.2 2H8.6V4.6" fill="none" stroke="#6aa0e0" stroke-width="0.8"/></svg>
<svg style="left:351.6px;top:202px" width="13" height="12"><path d="M0.8 0.8L11.6 10.6M11.6 0.8L0.8 10.6" fill="none" stroke="#444" stroke-width="1.5"/></svg>
<div class="a" style="left:421.3px;top:164.3px;width:164.4px;height:53.6px;background:#fff;border:1px solid #bebebe;box-sizing:border-box;box-shadow:1px 1.5px 3px rgba(0,0,0,0.2)"></div>
<span class="t" id="t107" style="left:427.7px;top:169.5px;font-size:9.7px;color:#444;font-weight:bold;letter-spacing:-0.126px;">Highlight Driving Predecessors</span>
<span class="t" id="t108" style="left:427.7px;top:186.6px;font-size:9.6px;color:#6a6a6a;letter-spacing:0.022px;">Highlight predecessors that directly</span>
<span class="t" id="t109" style="left:427.7px;top:199.9px;font-size:9.6px;color:#6a6a6a;letter-spacing:-0.073px;">affect the selected task.</span>
<span class="t" style="left:1.6px;top:44.6px;font-size:23.6px;line-height:24px;color:#a35fc9;font-weight:normal;transform:scaleX(0.8);transform-origin:0 0">A</span>
<span class="t" style="left:7px;top:47.6px;font-family:'Liberation Serif',serif;font-size:28.5px;line-height:28px;color:#3e7dc2;font-weight:bold;transform:scaleX(0.93);transform-origin:0 0">A</span>
<svg style="left:36.8px;top:48.9px" width="23.2" height="22.8"><rect x="0.5" y="0.5" width="22.2" height="21.8" fill="#fff" stroke="#8a8a8a"/><path d="M7.9 0.5V22.3M15.3 0.5V22.3M0.5 7.8H22.7M0.5 15.1H22.7" stroke="#8a8a8a" stroke-width="1" fill="none"/></svg>
<svg style="left:47.3px;top:93px" width="4" height="3"><path d="M0 0H3.8L1.9 2.1Z" fill="#666"/></svg>
<svg style="left:75.5px;top:49.3px" width="22" height="22.6"><path d="M0.5 0.5H11.5L16.6 5.6V22H0.5Z" fill="#fff" stroke="#a0a0a0"/><path d="M11.5 0.5V5.6H16.6" fill="none" stroke="#a0a0a0"/><path d="M4.5 8.5H13M4.5 12H13M4.5 15.5H8M4.5 19H8" stroke="#b5b5b5" stroke-width="0.7"/><path d="M2.6 8.5h1M2.6 12h1M2.6 15.5h1M2.6 19h1" stroke="#8a8a8a" stroke-width="1"/><rect x="8.5" y="15" width="13" height="6.5" fill="#3f77bb"/></svg>
<svg style="left:111px;top:49.3px" width="23" height="22.3"><rect x="0.5" y="2" width="5.8" height="9" fill="#fff" stroke="#b0b0b0" stroke-width="0.8"/><rect x="16.6" y="2" width="5.8" height="9" fill="#fff" stroke="#b0b0b0" stroke-width="0.8"/><path d="M11.5 0L15.4 4.6H12.9V11.6H10.1V4.6H7.6Z" fill="#3f7ec4"/><rect x="8.6" y="12.4" width="5.8" height="9.4" fill="#bcd6ee" stroke="#9a9a9a" stroke-width="0.8"/></svg>
<div class="a" style="left:141px;top:47.4px;width:15.8px;height:16.4px;background:#c6c6c6;"></div>
<div class="a" style="left:189px;top:47.4px;width:16px;height:16.4px;background:#c6c6c6;"></div>
<svg style="left:143.5px;top:49.5px" width="11" height="13"><path d="M0 0.8H10.6M0 3.6H10.6M0 6.4H10.6M0 9.2H10.6M0 12H10.6" stroke="#7a7a7a" stroke-width="0.85"/></svg>
<svg style="left:159.4px;top:49.5px" width="11" height="13"><path d="M0 0.8H10.8M1.8 3.6H9M0 6.4H10.8M1.8 9.2H9M0 12H10.8" stroke="#7a7a7a" stroke-width="0.85"/></svg>
<svg style="left:175.2px;top:49.5px" width="11.4" height="13"><path d="M0 0.8H11.2M2.6 3.6H11.2M0 6.4H11.2M2.6 9.2H11.2M0 12H11.2" stroke="#7a7a7a" stroke-width="0.85"/></svg>
<svg style="left:191px;top:49px" width="13" height="14"><rect x="0.5" y="0.5" width="7.6" height="5.2" fill="#fff" stroke="#777" stroke-width="0.9"/><rect x="0.5" y="7.4" width="7.6" height="5.6" fill="#fff" stroke="#777" stroke-width="0.9"/><path d="M1.6 2.4H7" stroke="#3f77bb" stroke-width="1.2"/><path d="M1.6 10.4H5" stroke="#3f77bb" stroke-width="1.2"/><path d="M8.6 3H10.4Q12.2 3 12.2 5.4Q12.2 8 9.6 8" fill="none" stroke="#3f77bb" stroke-width="1.1"/><path d="M10.2 6.2L8.2 8L10.2 9.8Z" fill="#3f77bb"/></svg>
<svg style="left:143px;top:67.2px" width="12.4" height="12.4"><rect x="0.4" y="0.4" width="9.8" height="10" fill="#fff" stroke="#8a8a8a" stroke-width="0.8"/><rect x="3.7" y="0.4" width="3.2" height="10" fill="#bcd6ee"/><path d="M3.7 0.4V10.4M6.9 0.4V10.4M0.4 3.7H10.2M0.4 7H10.2" stroke="#8a8a8a" stroke-width="0.7" stroke-dasharray="1 0.6"/><circle cx="8.6" cy="8.6" r="2.6" fill="none" stroke="#f07a1c" stroke-width="1.8" stroke-dasharray="1.4 0.65"/><circle cx="8.6" cy="8.6" r="2" fill="none" stroke="#f07a1c" stroke-width="1.2"/></svg>
<svg style="left:229.5px;top:72.2px" width="4" height="3"><path d="M0 0H3.8L1.9 2.1Z" fill="#666"/></svg>
<svg style="left:143px;top:84.7px" width="12" height="11.4"><rect x="2.4" y="2" width="9" height="8.8" fill="#fff" stroke="#8a8a8a" stroke-width="0.8"/><rect x="5.3" y="2" width="3" height="8.8" fill="#bcd6ee"/><path d="M5.3 2V10.8M8.3 2V10.8M2.4 5H11.4M2.4 8H11.4" stroke="#8a8a8a" stroke-width="0.7" stroke-dasharray="1 0.6"/><rect x="0.4" y="0.4" width="2.8" height="2.8" fill="#fff" stroke="#f0a04a" stroke-width="0.8"/></svg>
<svg style="left:247px;top:49.5px" width="24" height="22"><path d="M6.6 3.6L12.6 8.4L6.4 14.2L0.8 9Z" fill="#fff" stroke="#8a8a8a" stroke-width="0.9"/><path d="M6.6 5.6V1.6Q6.6 0.4 5.4 0.5Q4.2 0.6 4.2 2V5" fill="none" stroke="#8a8a8a" stroke-width="0.9"/><path d="M12 7.6Q15 8 14.6 14.6H12.2Q13.4 9.6 11.4 8.6Z" fill="#ed8733"/><rect x="8" y="14.7" width="14.8" height="3.3" fill="#ed8733"/><rect x="8" y="18" width="14.8" height="3.2" fill="#3c74b8"/></svg>
<svg style="left:256.7px;top:93px" width="4" height="3"><path d="M0 0H3.8L1.9 2.1Z" fill="#666"/></svg>
<svg style="left:352px;top:52.4px" width="24.4" height="21.4"><rect x="0.1" y="0.1" width="12.3" height="5.9" fill="#fac748"/><path d="M12.4 3H15.2Q16.6 3 16.6 4.4V6.6" fill="none" stroke="#f0b429" stroke-width="1.1"/><path d="M14.4 6.2H18.8L16.6 9Z" fill="#f0b429"/><rect x="9.4" y="9.4" width="12.3" height="5.7" fill="#8ab8ec"/><rect x="10.8" y="15.6" width="7.6" height="4.8" rx="2.4" fill="none" stroke="#3c74b8" stroke-width="1.5"/><rect x="15.6" y="15.6" width="7.6" height="4.8" rx="2.4" fill="none" stroke="#3c74b8" stroke-width="1.5"/></svg>
<svg style="left:371.8px;top:93px" width="4" height="3"><path d="M0 0H3.8L1.9 2.1Z" fill="#666"/></svg>
<svg style="left:385.6px;top:51px" width="22.4" height="20.6"><rect x="0" y="0.1" width="12.5" height="3.2" fill="#3c74b8"/><rect x="0.45" y="4.3" width="14.4" height="3.8" fill="#fff" stroke="#5b8fcf" stroke-width="0.9"/><rect x="3.8" y="12.1" width="13.7" height="5.2" fill="#3c74b8"/><rect x="10.6" y="16" width="11.2" height="4.1" fill="#fff" stroke="#5b8fcf" stroke-width="0.9"/></svg>
<svg style="left:394.6px;top:93px" width="4" height="3"><path d="M0 0H3.8L1.9 2.1Z" fill="#666"/></svg>
<svg style="left:423.6px;top:53.3px" width="23.4" height="14"><rect x="5.4" y="0" width="13.3" height="5.5" fill="#3c74b8"/><path d="M0 5.2H5.4" stroke="#505050" stroke-width="1"/><rect x="10.5" y="7.8" width="12.7" height="5.9" fill="#3c74b8"/><path d="M0 13.2H10.5" stroke="#505050" stroke-width="1"/></svg>
<svg style="left:432.6px;top:93px" width="4" height="3"><path d="M0 0H3.8L1.9 2.1Z" fill="#666"/></svg>
<svg style="left:466.2px;top:53px" width="35" height="39"><path d="M1.1 9V1.2H30.8V9" fill="none" stroke="#4a4a4a" stroke-width="2.3"/><rect x="3.8" y="9.5" width="24.7" height="6.1" fill="#73c7d1"/><rect x="3.8" y="18" width="24.7" height="6.1" fill="#8ab8ec"/><path d="M28.5 11.4H29.4Q30.2 11.4 30.2 12.4V26.5" fill="none" stroke="#7fd0d8" stroke-width="0.9"/><path d="M27 26.3H33.4L30.2 29.7Z" fill="#23a0b0"/><path d="M26.3 28.8L30.7 33.2L26.3 37.6L21.9 33.2Z" fill="#2ba3ae"/></svg>
<svg style="left:511.25px;top:53px" width="35" height="39"><path d="M1.1 9V1.2H30.8V9" fill="none" stroke="#4a4a4a" stroke-width="2.3"/><rect x="3.8" y="9.5" width="24.7" height="6.1" fill="#d6388b"/><rect x="3.8" y="18" width="24.7" height="6.1" fill="#6f5ba7"/><path d="M28.5 11.4H29.4Q30.2 11.4 30.2 12.4V26.5" fill="none" stroke="#e58ab8" stroke-width="0.9"/><path d="M27 26.3H33.4L30.2 29.7Z" fill="#c0186e"/><path d="M26.3 28.8L30.7 33.2L26.3 37.6L21.9 33.2Z" fill="#c2186b"/></svg>
<svg style="left:556.3px;top:53px" width="35" height="39"><path d="M1.1 9V1.2H30.8V9" fill="none" stroke="#4a4a4a" stroke-width="2.3"/><rect x="3.8" y="9.5" width="24.7" height="6.1" fill="#a85ba8"/><rect x="3.8" y="18" width="24.7" height="6.1" fill="#3b3a66"/><path d="M28.5 11.4H29.4Q30.2 11.4 30.2 12.4V26.5" fill="none" stroke="#d3a3d3" stroke-width="0.9"/><path d="M27 26.3H33.4L30.2 29.7Z" fill="#962d96"/><path d="M26.3 28.8L30.7 33.2L26.3 37.6L21.9 33.2Z" fill="#b266b2"/></svg>
<svg style="left:601.35px;top:53px" width="35" height="39"><path d="M1.1 9V1.2H30.8V9" fill="none" stroke="#4a4a4a" stroke-width="2.3"/><rect x="3.8" y="9.5" width="24.7" height="6.1" fill="#9a9a9a"/><rect x="3.8" y="18" width="24.7" height="6.1" fill="#5577a8"/><path d="M28.5 11.4H29.4Q30.2 11.4 30.2 12.4V26.5" fill="none" stroke="#8a8a8a" stroke-width="0.9"/><path d="M27 26.3H33.4L30.2 29.7Z" fill="#444444"/><path d="M26.3 28.8L30.7 33.2L26.3 37.6L21.9 33.2Z" fill="#555555"/></svg>
<svg style="left:646.4px;top:53px" width="35" height="39"><path d="M1.1 9V1.2H30.8V9" fill="none" stroke="#4a4a4a" stroke-width="2.3"/><rect x="3.8" y="9.5" width="24.7" height="6.1" fill="#7cc3d8"/><rect x="3.8" y="18" width="24.7" height="6.1" fill="#9c9c9c"/><path d="M28.5 11.4H29.4Q30.2 11.4 30.2 12.4V26.5" fill="none" stroke="#9ad3e4" stroke-width="0.9"/><path d="M27 26.3H33.4L30.2 29.7Z" fill="#1f9fc0"/><path d="M26.3 28.8L30.7 33.2L26.3 37.6L21.9 33.2Z" fill="#3a9c82"/></svg>
<svg style="left:691.45px;top:53px" width="35" height="39"><path d="M1.1 9V1.2H30.8V9" fill="none" stroke="#4a4a4a" stroke-width="2.3"/><rect x="3.8" y="9.5" width="24.7" height="6.1" fill="#4dbfa4"/><rect x="3.8" y="18" width="24.7" height="6.1" fill="#2878b8"/><path d="M28.5 11.4H29.4Q30.2 11.4 30.2 12.4V26.5" fill="none" stroke="#a8d4e0" stroke-width="0.9"/><path d="M27 26.3H33.4L30.2 29.7Z" fill="#2a9f94"/><path d="M26.3 28.8L30.7 33.2L26.3 37.6L21.9 33.2Z" fill="#2e9c8c"/></svg>
<svg style="left:736.5px;top:53px" width="35" height="39"><path d="M1.1 9V1.2H30.8V9" fill="none" stroke="#4a4a4a" stroke-width="2.3"/><rect x="3.8" y="9.5" width="24.7" height="6.1" fill="#a7c73a"/><rect x="3.8" y="18" width="24.7" height="6.1" fill="#73bfd3"/><path d="M28.5 11.4H29.4Q30.2 11.4 30.2 12.4V26.5" fill="none" stroke="#dbe3a8" stroke-width="0.9"/><path d="M27 26.3H33.4L30.2 29.7Z" fill="#8fa01e"/><path d="M26.3 28.8L30.7 33.2L26.3 37.6L21.9 33.2Z" fill="#8a9c2a"/></svg>
<svg style="left:781.55px;top:53px" width="35" height="39"><path d="M1.1 9V1.2H30.8V9" fill="none" stroke="#4a4a4a" stroke-width="2.3"/><rect x="3.8" y="9.5" width="24.7" height="6.1" fill="#4cb848"/><rect x="3.8" y="18" width="24.7" height="6.1" fill="#1d5bbf"/><path d="M28.5 11.4H29.4Q30.2 11.4 30.2 12.4V26.5" fill="none" stroke="#9ad08a" stroke-width="0.9"/><path d="M27 26.3H33.4L30.2 29.7Z" fill="#2e9b12"/><path d="M26.3 28.8L30.7 33.2L26.3 37.6L21.9 33.2Z" fill="#3a8e2e"/></svg>
<div class="a" style="left:822.6px;top:47.6px;width:12px;height:48.4px;background:#fff;border:1px solid #d0d0d0;box-sizing:border-box;"></div>
<div class="a" style="left:823.6px;top:48.5px;width:10px;height:15.5px;background:#dcdcdc;"></div>
<div class="a" style="left:823.6px;top:64px;width:10px;height:1px;background:#d0d0d0;"></div>
<div class="a" style="left:823.6px;top:79.4px;width:10px;height:1px;background:#d0d0d0;"></div>
<svg style="left:826.2px;top:56px" width="5" height="3"><path d="M0 2.4H4.6L2.3 0Z" fill="#b5b5b5"/></svg>
<svg style="left:826.6px;top:71.4px" width="4" height="3"><path d="M0 0H3.8L1.9 2.1Z" fill="#666"/></svg>
<svg style="left:826.6px;top:87.8px" width="4" height="3"><path d="M0 0H3.8L1.9 2.1Z" fill="#666"/></svg>
<svg style="left:826.3px;top:85.2px" width="5" height="1"><path d="M0 0.5H4.6" stroke="#666" stroke-width="0.8"/></svg>
<svg style="left:828.5px;top:105.5px" width="6" height="6"><path d="M0.4 4V0.4H4" fill="none" stroke="#777" stroke-width="0.8"/><path d="M2.2 2.2L5 5M5.2 2.6V5.2H2.6" fill="none" stroke="#777" stroke-width="0.8"/></svg>
<svg style="left:965px;top:49.5px" width="23" height="23"><rect x="0.5" y="0.5" width="15.5" height="15.5" fill="#fff" stroke="#8ab0dc" stroke-width="0.9"/><circle cx="14.6" cy="14.4" r="7.4" fill="#fff" stroke="#8ab0dc" stroke-width="0.9"/></svg>
<svg style="left:974.4px;top:93px" width="4" height="3"><path d="M0 0H3.8L1.9 2.1Z" fill="#666"/></svg>
<svg style="left:1014px;top:105.6px" width="7.4" height="5"><path d="M0.5 4.4L3.5 1.2L6.5 4.4" fill="none" stroke="#555" stroke-width="1.2"/></svg>
<svg style="left:13px;top:5.2px" width="11" height="10.6"><path d="M0.6 0.6H8.6L10.4 2.4V10H0.6Z" fill="none" stroke="#fff" stroke-width="1.1"/><rect x="2.4" y="0.8" width="5.6" height="3.6" fill="#fff"/><rect x="2.8" y="6.6" width="5.2" height="3.2" fill="#fff"/><rect x="4.4" y="7.6" width="1.3" height="2.2" fill="#31752f"/></svg>
<svg style="left:35.8px;top:5.2px" width="12.4" height="11"><path d="M1.2 4.2H7.4Q11 4.2 11 7.4Q11 10.2 7.6 10.2H6.4" fill="none" stroke="#fff" stroke-width="1.5"/><path d="M5 0.6L1.2 4.2L5 7.8" fill="none" stroke="#fff" stroke-width="1.5"/></svg>
<svg style="left:54px;top:9.2px" width="4" height="3"><path d="M0 0H3.6L1.8 2Z" fill="#fff"/></svg>
<svg style="left:64.2px;top:5.2px" width="12.4" height="11"><path d="M11 4.2H4.8Q1.2 4.2 1.2 7.4Q1.2 10.2 4.6 10.2H5.8" fill="none" stroke="#5f9a5d" stroke-width="1.5"/><path d="M7.2 0.6L11 4.2L7.2 7.8" fill="none" stroke="#5f9a5d" stroke-width="1.5"/></svg>
<svg style="left:81.8px;top:9.2px" width="4" height="3"><path d="M0 0H3.6L1.8 2Z" fill="#5f9a5d"/></svg>
<svg style="left:93.8px;top:4.8px" width="12" height="12.4"><path d="M0.6 0.6H5.6L8.2 3.2V4.4M0.6 0.6V11.4H5" fill="none" stroke="#fff" stroke-width="1"/><path d="M5.4 0.8V3.4H8" fill="none" stroke="#fff" stroke-width="0.8"/><circle cx="6.9" cy="7.1" r="2.7" fill="none" stroke="#fff" stroke-width="1.1"/><path d="M8.9 9.2L11.2 11.6" stroke="#fff" stroke-width="1.3"/></svg>
<svg style="left:119px;top:8.6px" width="5" height="5"><path d="M0.2 0.5H4.4" stroke="#fff" stroke-width="0.9"/><path d="M0.2 2.2H4.4L2.3 4.4Z" fill="#fff"/></svg>
<svg style="left:337.6px;top:29.2px" width="9.2" height="12.4"><path d="M4.5 0.6Q8.1 0.6 8.1 4Q8.1 5.6 6.7 7Q6.2 7.7 6.2 8.6H2.8Q2.8 7.7 2.3 7Q0.9 5.6 0.9 4Q0.9 0.6 4.5 0.6Z" fill="none" stroke="#e4efe3" stroke-width="1"/><path d="M3 10H6M3.3 11.5H5.7" stroke="#e4efe3" stroke-width="0.95"/></svg>
<div class="a" style="left:930px;top:11.1px;width:8.2px;height:0.9px;background:#e8f0e8;"></div>
<svg style="left:967px;top:6.8px" width="8.4" height="8.2"><rect x="0.5" y="1.9" width="5.8" height="5.8" fill="none" stroke="#e8f0e8" stroke-width="0.9"/><path d="M1.9 1.9V0.5H7.7V6.3H6.3" fill="none" stroke="#e8f0e8" stroke-width="0.9"/></svg>
<svg style="left:1004.1px;top:7px" width="8.4" height="8"><path d="M0.3 0.3L8 7.7M8 0.3L0.3 7.7" stroke="#e8f0e8" stroke-width="0.9"/></svg>
<svg style="left:967px;top:30px" width="8.4" height="8.2"><rect x="0.5" y="1.9" width="5.8" height="5.8" fill="none" stroke="#e8f0e8" stroke-width="0.9"/><path d="M1.9 1.9V0.5H7.7V6.3H6.3" fill="none" stroke="#e8f0e8" stroke-width="0.9"/></svg>
<svg style="left:1004.1px;top:30.2px" width="8.4" height="8"><path d="M0.3 0.3L8 7.7M8 0.3L0.3 7.7" stroke="#e8f0e8" stroke-width="0.9"/></svg>
<svg style="left:42.3px;top:532.6px" width="11" height="10"><rect x="0" y="0" width="9.4" height="4.2" fill="#7a7a7a"/><path d="M2.4 6.8H9.4M7.2 4.4L9.8 6.8L7.2 9.2" fill="none" stroke="#7a7a7a" stroke-width="1.3"/></svg>
<svg style="left:806.2px;top:532.3px" width="10.4" height="10"><rect x="0.45" y="0.45" width="9.4" height="9" fill="none" stroke="#6f6f6f" stroke-width="0.9"/><path d="M1.8 2.6H5M3.6 4.8H7M5.6 7H8.4" stroke="#6f6f6f" stroke-width="1"/><path d="M5 2.6V4.8M7 4.8V7" stroke="#6f6f6f" stroke-width="0.6" fill="none"/></svg>
<svg style="left:830.3px;top:532.3px" width="10.4" height="10"><rect x="0" y="0" width="10.3" height="2.8" fill="#555"/><rect x="0.45" y="0.45" width="9.4" height="9" fill="none" stroke="#6f6f6f" stroke-width="0.9"/><path d="M0.4 5H10M0.4 7.2H10M3.4 2.8V9.6M6.7 2.8V9.6" stroke="#6f6f6f" stroke-width="0.8"/></svg>
<svg style="left:854.3px;top:532.3px" width="10.6" height="10"><rect x="0.45" y="0.45" width="9.6" height="9" fill="#fff" stroke="#6f6f6f" stroke-width="0.9"/><rect x="6.4" y="0.6" width="3.6" height="3" fill="#555"/><rect x="0.6" y="3.6" width="6" height="2.8" fill="#555"/><path d="M0.4 6.6H10" stroke="#6f6f6f" stroke-width="0.7"/></svg>
<svg style="left:878.2px;top:532.3px" width="10.8" height="10"><rect x="0.45" y="0.45" width="9.8" height="9" fill="#fff" stroke="#6f6f6f" stroke-width="0.9"/><path d="M3.6 0.4V9.6M7 0.4V9.6M0.4 3.4H10.2M0.4 6.5H10.2" stroke="#6f6f6f" stroke-width="0.8"/></svg>
<svg style="left:902.6px;top:532.3px" width="10.6" height="10"><rect x="1.6" y="0.45" width="8.2" height="9" rx="0.8" fill="#fff" stroke="#6f6f6f" stroke-width="0.9"/><path d="M0.2 2.2H2.4M0.2 4.9H2.4M0.2 7.6H2.4" stroke="#6f6f6f" stroke-width="0.9"/></svg>
<div class="a" style="left:922.9px;top:536.1px;width:6.3px;height:1.3px;background:#555;"></div>
<div class="a" style="left:932px;top:536.4px;width:80px;height:0.8px;background:#a9a9a9;"></div>
<div class="a" style="left:972px;top:534.4px;width:0.8px;height:4.8px;background:#a9a9a9;"></div>
<div class="a" style="left:959px;top:532.6px;width:3.3px;height:9.4px;background:#555;"></div>
<div class="a" style="left:1014.8px;top:536.1px;width:7.2px;height:1.3px;background:#555;"></div>
<div class="a" style="left:1017.75px;top:533.1px;width:1.3px;height:7.3px;background:#555;"></div>
</div></body></html>
